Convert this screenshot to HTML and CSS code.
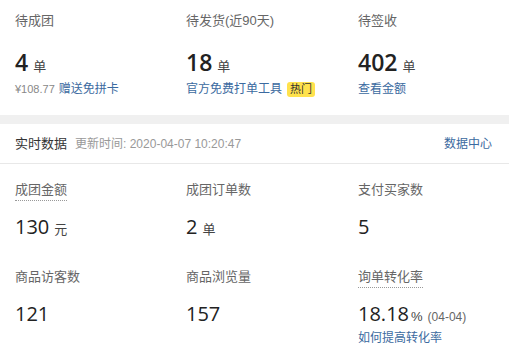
FILE: index.html
```html
<!DOCTYPE html>
<html lang="zh">
<head>
  <meta charset="UTF-8">
  <title>数据概览</title>
  <link rel="stylesheet" href="styles.css">
</head>
<body>
  <!-- 订单状态 -->
  <div class="summary">
    <div class="cell">
      <div class="label">待成团</div>
      <div class="value big">4<span class="unit">单</span></div>
      <div class="sub"><span class="money">¥108.77</span><a class="link">赠送免拼卡</a></div>
    </div>
    <div class="cell">
      <div class="label">待发货(近90天)</div>
      <div class="value big">18<span class="unit">单</span></div>
      <div class="sub"><a class="link">官方免费打单工具</a><span class="tag">热门</span></div>
    </div>
    <div class="cell">
      <div class="label">待签收</div>
      <div class="value big">402<span class="unit">单</span></div>
      <div class="sub"><a class="link">查看金额</a></div>
    </div>
  </div>

  <div class="band"></div>

  <!-- 实时数据 -->
  <div class="panel-head">
    <div class="title">实时数据<span class="time">更新时间: 2020-04-07 10:20:47</span></div>
    <a class="link">数据中心</a>
  </div>

  <div class="grid">
    <div class="cell">
      <div class="label"><span class="dotted">成团金额</span></div>
      <div class="value">130<span class="unit">元</span></div>
    </div>
    <div class="cell">
      <div class="label">成团订单数</div>
      <div class="value">2<span class="unit">单</span></div>
    </div>
    <div class="cell">
      <div class="label">支付买家数</div>
      <div class="value">5</div>
    </div>
    <div class="cell">
      <div class="label">商品访客数</div>
      <div class="value">121</div>
    </div>
    <div class="cell">
      <div class="label">商品浏览量</div>
      <div class="value">157</div>
    </div>
    <div class="cell">
      <div class="label"><span class="dotted">询单转化率</span></div>
      <div class="value">18.18<span class="unit pct">%</span><span class="date">(04-04)</span></div>
      <div class="sub"><a class="link">如何提高转化率</a></div>
    </div>
  </div>
</body>
</html>
```

FILE: styles.css
```css
body {
  margin: 0;
  background: #fff;
  font-family: "Liberation Sans", "Noto Sans CJK SC", sans-serif;
  color: #333;
  font-size: 13px;
}

.summary {
  display: grid;
  grid-template-columns: 171px 172px 1fr;
  padding: 12px 0 17px 15px;
}

.label {
  font-size: 13px;
  line-height: 18px;
  height: 18px;
  color: #666;
}

.value {
  font-family: "Open Sans", "Noto Sans CJK SC", sans-serif;
  font-size: 20px;
  line-height: 28px;
  height: 28px;
  color: #222;
  margin-top: 14px;
  display: flex;
  align-items: baseline;
}

.value.big {
  font-size: 23px;
  font-weight: 600;
  margin-top: 18px;
}

.unit {
  font-family: "Liberation Sans", "Noto Sans CJK SC", sans-serif;
  font-size: 13px;
  font-weight: normal;
  color: #444;
  margin-left: 5px;
}

.unit.pct {
  margin-left: 2px;
}

.date {
  font-family: "Liberation Sans", "Noto Sans CJK SC", sans-serif;
  font-size: 12px;
  color: #666;
  margin-left: 5px;
}

.sub {
  font-size: 12px;
  line-height: 18px;
  height: 18px;
  margin-top: 4px;
  display: flex;
  align-items: center;
}

.money {
  color: #888;
  font-size: 11px;
  margin-right: 4px;
}

.link {
  color: #3b6aa0;
  cursor: pointer;
}

.tag {
  background: #ffe24d;
  color: #333;
  font-size: 11px;
  line-height: 15px;
  padding: 0 3px;
  border-radius: 3px;
  margin-left: 5px;
}

.band {
  height: 9px;
  background: #f0f0f0;
}

.panel-head {
  display: flex;
  justify-content: space-between;
  align-items: center;
  height: 37px;
  padding: 0 17px 2px 15px;
  border-bottom: 1px solid #e8e8e8;
}

.title {
  font-size: 13px;
  color: #333;
}

.time {
  font-size: 12px;
  color: #999;
  margin-left: 8px;
}

.panel-head .link {
  font-size: 12px;
}

.grid {
  display: grid;
  grid-template-columns: 171px 172px 1fr;
  row-gap: 27px;
  padding: 17px 0 0 15px;
}

.grid .sub {
  margin-top: 1px;
}

.dotted {
  border-bottom: 1px dotted #999;
  padding-bottom: 3px;
}
```
